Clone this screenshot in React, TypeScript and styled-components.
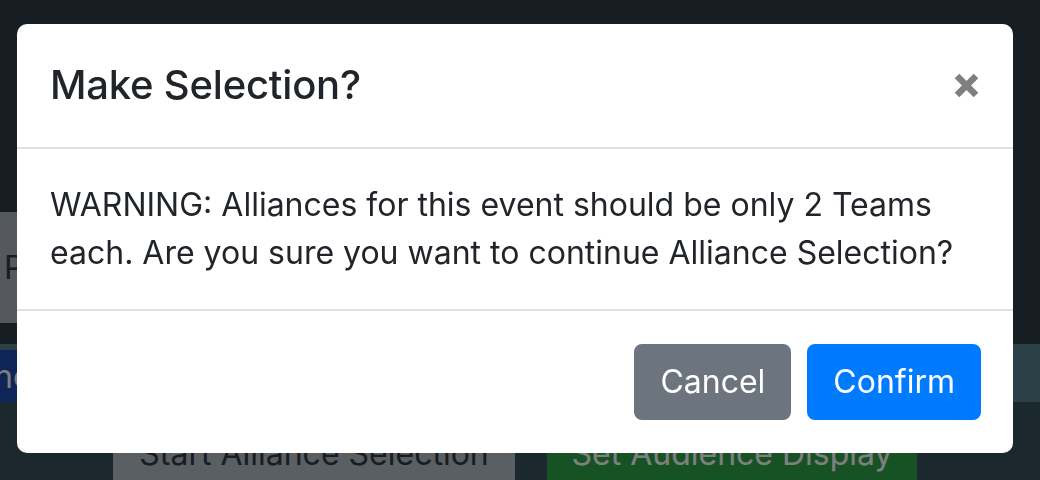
import styled, { createGlobalStyle } from "styled-components";

const GlobalStyle = createGlobalStyle`
  html, body {
    margin: 0;
    padding: 0;
    height: 100%;
    overflow: hidden;
  }
  body {
    font-family: Inter, "Liberation Sans", sans-serif;
    background: #2c3a46;
  }
`;

const Page = styled.div`
  width: 1040px;
  height: 480px;
  overflow: hidden;
  display: flex;
  flex-direction: column;
`;

const TopSection = styled.div`
  flex-shrink: 0;
  height: 344px;
  box-sizing: border-box;
  padding-top: 212px;
  background: #2c3a46;
`;

const PanelButton = styled.div`
  width: 220px;
  height: 111px;
  display: flex;
  align-items: center;
  padding-left: 4px;
  box-sizing: border-box;
  background: #aab1b9;
  color: #343a40;
  font-size: 32px;
`;

const StatusRow = styled.div`
  flex-shrink: 0;
  height: 58px;
  box-sizing: border-box;
  padding-top: 6px;
  background: #56808e;
`;

const StatusPill = styled.div`
  width: 300px;
  height: 52px;
  margin-left: -104px;
  display: flex;
  align-items: center;
  background: #1a4aae;
  color: #ffffff;
  font-size: 32px;
`;

const BottomSection = styled.div`
  flex-shrink: 0;
  display: flex;
  gap: 32px;
  padding: 16px 0 0 113px;
  background: #36505a;
`;

const PageButton = styled.div<{ $tone: "light" | "success"; $width: number }>`
  width: ${(p) => p.$width}px;
  height: 80px;
  box-sizing: border-box;
  padding: 12px 0 0;
  display: flex;
  justify-content: center;
  line-height: 48px;
  font-size: 32px;
  background: ${(p) => (p.$tone === "light" ? "#b4bec6" : "#2ca448")};
  color: ${(p) => (p.$tone === "light" ? "#343a40" : "#ffffff")};
`;

const Backdrop = styled.div`
  position: fixed;
  inset: 0;
  background: rgba(0, 0, 0, 0.5);
`;

const ModalWrap = styled.div`
  position: fixed;
  inset: 0;
  display: flex;
  justify-content: flex-start;
  align-items: flex-start;
  padding: 24px 0 0 17px;
`;

const Modal = styled.div`
  width: 996px;
  background: #ffffff;
  border-radius: 10px;
  color: #212529;
  overflow: hidden;
`;

const Header = styled.div`
  display: flex;
  align-items: center;
  justify-content: space-between;
  padding: 31px 32px 32px 33px;
  border-bottom: 2px solid #dee2e6;
`;

const Title = styled.h5`
  margin: 0;
  font-size: 40px;
  font-weight: 500;
  line-height: 60px;
  letter-spacing: -0.2px;
`;

const CloseButton = styled.button`
  border: none;
  background: transparent;
  padding: 0;
  margin-right: 2px;
  width: 25px;
  height: 25px;
  display: flex;
  cursor: pointer;
`;

const Body = styled.div`
  padding: 32px 32px 32px 33px;
  font-size: 32px;
  line-height: 48px;
  border-bottom: 2px solid #dee2e6;
`;

const Footer = styled.div`
  display: flex;
  justify-content: flex-end;
  gap: 16px;
  padding: 33px 32px;
`;

const Button = styled.button<{ $variant: "secondary" | "primary" }>`
  font-family: inherit;
  font-size: 32px;
  line-height: 48px;
  padding: 12px 24px;
  border: 2px solid transparent;
  border-radius: 8px;
  color: #ffffff;
  cursor: pointer;
  background: ${(p) => (p.$variant === "primary" ? "#007bff" : "#6c757d")};
  border-color: ${(p) => (p.$variant === "primary" ? "#007bff" : "#6c757d")};
`;

export default function App() {
  return (
    <>
      <GlobalStyle />
      <Page>
        <TopSection>
          <PanelButton>Picks</PanelButton>
        </TopSection>
        <StatusRow>
          <StatusPill>Announce</StatusPill>
        </StatusRow>
        <BottomSection>
          <PageButton $tone="light" $width={402}>
            Start Alliance Selection
          </PageButton>
          <PageButton $tone="success" $width={370}>
            Set Audience Display
          </PageButton>
        </BottomSection>
      </Page>
      <Backdrop />
      <ModalWrap>
        <Modal>
          <Header>
            <Title>Make Selection?</Title>
            <CloseButton aria-label="Close">
              <svg width="25" height="25" viewBox="0 0 25 25">
                <path
                  d="M3 3 L22 22 M22 3 L3 22"
                  stroke="#7f7f7f"
                  strokeWidth="6.5"
                  fill="none"
                />
              </svg>
            </CloseButton>
          </Header>
          <Body>
            WARNING: Alliances for this event should be only 2 Teams each. Are
            you sure you want to continue Alliance Selection?
          </Body>
          <Footer>
            <Button $variant="secondary">Cancel</Button>
            <Button $variant="primary">Confirm</Button>
          </Footer>
        </Modal>
      </ModalWrap>
    </>
  );
}
